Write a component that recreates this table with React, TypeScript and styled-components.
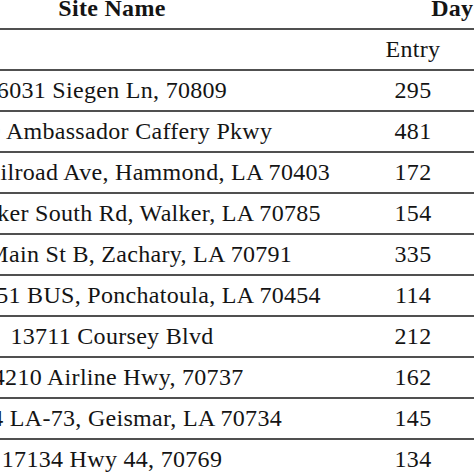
import React from 'react';
import styled, { createGlobalStyle } from 'styled-components';

interface Site {
    name: string,
    entry: number,
}

const sites: Array<Site> = [
    { name: '6031 Siegen Ln, 70809', entry: 295 },
    { name: '3809 Ambassador Caffery Pkwy', entry: 481 },
    { name: '1040 N Railroad Ave, Hammond, LA 70403', entry: 172 },
    { name: '9350 Walker South Rd, Walker, LA 70785', entry: 154 },
    { name: '4800 Main St B, Zachary, LA 70791', entry: 335 },
    { name: '1405 US 51 BUS, Ponchatoula, LA 70454', entry: 114 },
    { name: '13711 Coursey Blvd', entry: 212 },
    { name: '14210 Airline Hwy, 70737', entry: 162 },
    { name: '10154 LA-73, Geismar, LA 70734', entry: 145 },
    { name: '17134 Hwy 44, 70769', entry: 134 },
];

export default function App() {
    return (
        <>
            <GlobalStyle />
            <Table>
                <Row>
                    <SiteCell bold>Site Name</SiteCell>
                    <Spacer />
                    <GroupHead>Day Counts</GroupHead>
                </Row>
                <Row>
                    <SiteCell />
                    <Spacer />
                    <NumCell>Entry</NumCell>
                    <NumCell>Exit</NumCell>
                </Row>
                {sites.map((s) => (
                    <Row key={s.name}>
                        <SiteCell>{s.name}</SiteCell>
                        <Spacer />
                        <NumCell>{s.entry}</NumCell>
                        <NumCell />
                    </Row>
                ))}
            </Table>
        </>
    );
}

const GlobalStyle = createGlobalStyle`
    html, body {
        margin: 0;
        padding: 0;
        background: #ffffff;
        overflow: hidden;
    }
    body {
        font-family: "Liberation Serif", "Times New Roman", serif;
        color: #141414;
    }
`;

const Table = styled.div`
    display: flex;
    flex-direction: column;
    width: 613px;
    margin-top: -11px;
    font-size: 24px;
    letter-spacing: 0.3px;
`;

const Row = styled.div`
    display: grid;
    grid-template-columns: 224px 149px 80px 160px;
    height: 41px;
    border-bottom: 2px solid #505050;
    box-sizing: border-box;
    align-items: center;
`;

const SiteCell = styled.div<{ bold?: boolean }>`
    display: flex;
    justify-content: center;
    white-space: nowrap;
    font-weight: ${(p) => (p.bold ? 700 : 400)};
`;

const Spacer = styled.div``;

const NumCell = styled.div`
    text-align: center;
    white-space: nowrap;
`;

const GroupHead = styled.div`
    grid-column: 3 / span 2;
    text-align: center;
    font-weight: 700;
    white-space: nowrap;
`;
